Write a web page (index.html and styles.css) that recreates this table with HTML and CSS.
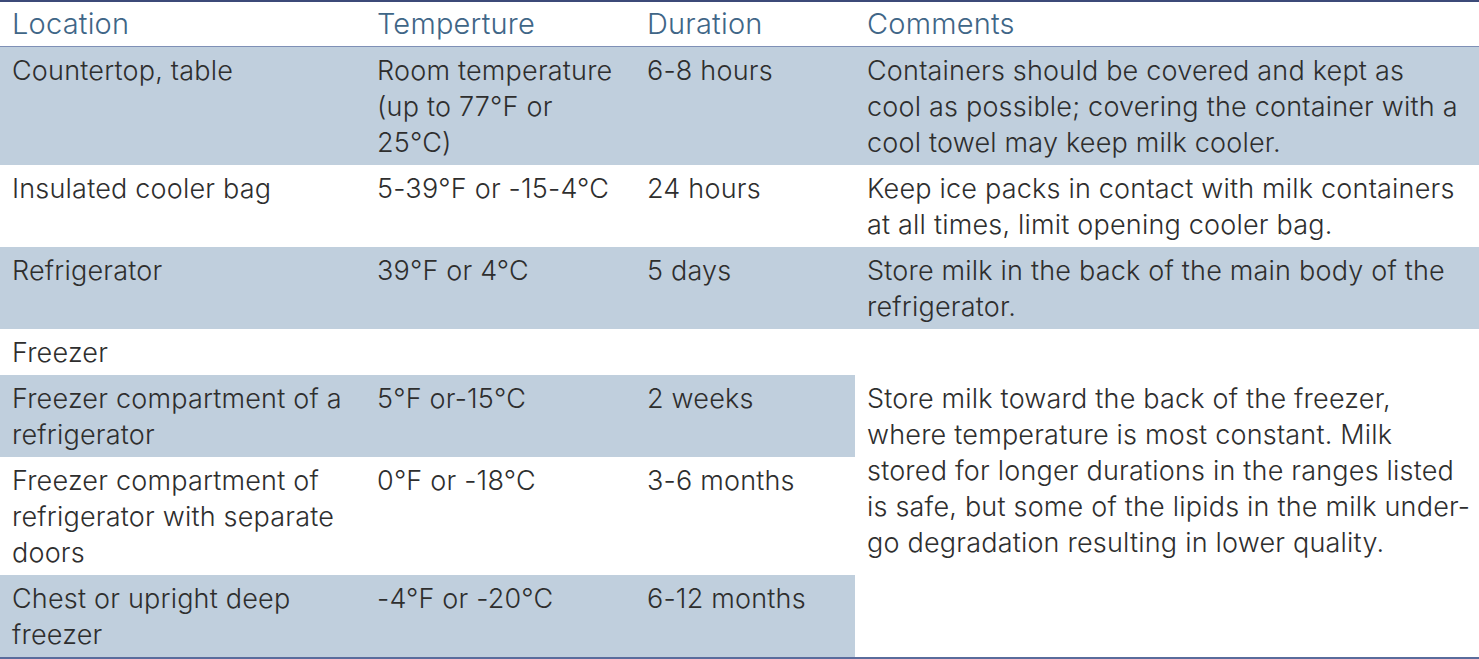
FILE: index.html
```html
<!DOCTYPE html>
<html lang="en">
<head>
<meta charset="utf-8">
<title>Milk storage</title>
<link rel="stylesheet" href="styles.css">
</head>
<body>
<table class="storage">
  <colgroup>
    <col class="c-loc">
    <col class="c-temp">
    <col class="c-dur">
    <col class="c-com">
  </colgroup>
  <thead>
    <tr class="head">
      <th>Location</th>
      <th>Temperture</th>
      <th>Duration</th>
      <th>Comments</th>
    </tr>
  </thead>
  <tbody>
    <tr class="shade">
      <td>Countertop, table</td>
      <td>Room temperature (up to 77°F or 25°C)</td>
      <td>6-8 hours</td>
      <td class="lines">Containers should be covered and kept as<br>cool as possible; covering the container with a<br>cool towel may keep milk cooler.</td>
    </tr>
    <tr>
      <td>Insulated cooler bag</td>
      <td>5-39°F or -15-4°C</td>
      <td>24 hours</td>
      <td>Keep ice packs in contact with milk containers at all times, limit opening cooler bag.</td>
    </tr>
    <tr class="shade">
      <td>Refrigerator</td>
      <td>39°F or 4°C</td>
      <td>5 days</td>
      <td>Store milk in the back of the main body of the refrigerator.</td>
    </tr>
    <tr>
      <td>Freezer</td>
      <td></td>
      <td></td>
      <td></td>
    </tr>
    <tr class="shade">
      <td>Freezer compartment of a refrigerator</td>
      <td>5°F or-15°C</td>
      <td>2 weeks</td>
      <td rowspan="3" class="plain lines">Store milk toward the back of the freezer,<br>where temperature is most constant. Milk<br>stored for longer durations in the ranges listed<br>is safe, but some of the lipids in the milk under-<br>go degradation resulting in lower quality.</td>
    </tr>
    <tr>
      <td>Freezer compartment of refrigerator with separate doors</td>
      <td>0°F or -18°C</td>
      <td>3-6 months</td>
    </tr>
    <tr class="shade last">
      <td>Chest or upright deep freezer</td>
      <td>-4°F or -20°C</td>
      <td>6-12 months</td>
    </tr>
  </tbody>
</table>
</body>
</html>
```

FILE: styles.css
```css
html, body {
  margin: 0;
  padding: 0;
  background: #ffffff;
}

.storage {
  width: 1479px;
  border-collapse: collapse;
  table-layout: fixed;
  font-family: "Inter", "Liberation Sans", sans-serif;
  font-weight: 300;
  font-size: 27px;
  letter-spacing: 0.2px;
  line-height: 36px;
  color: #2e2e2e;
  border-top: 2px solid #3c4a78;
  border-bottom: 2px solid #5a6c9c;
}

.c-loc { width: 365px; }
.c-temp { width: 270px; }
.c-dur { width: 220px; }
.c-com { width: 624px; }

.storage th,
.storage td {
  text-align: left;
  vertical-align: top;
  padding: 6px 12px 4px 12px;
}

.head th {
  font-weight: 300;
  font-size: 29px;
  color: #3f6687;
  padding: 4px 12px 4px 12px;
  border-bottom: 1px solid #7e90b6;
}

.shade td {
  background: #c0cfdd;
}

.shade td.plain {
  background: #ffffff;
}

.storage td.lines {
  white-space: nowrap;
}
```
